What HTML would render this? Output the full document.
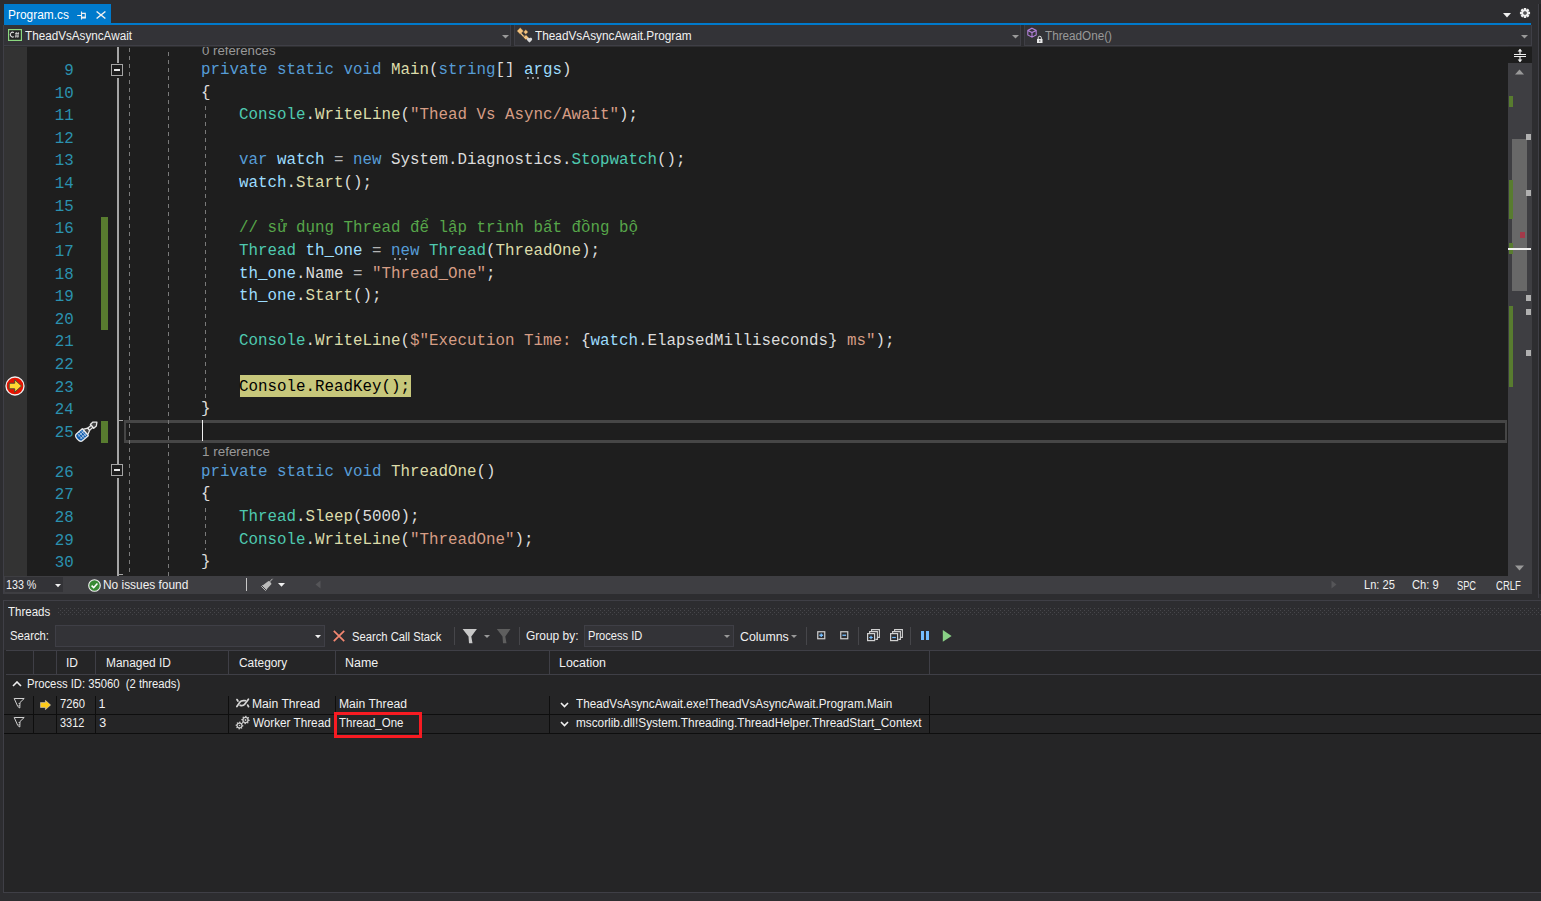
<!DOCTYPE html>
<html><head><meta charset="utf-8"><title>Program.cs</title>
<style>
html,body{margin:0;padding:0;}
body{width:1541px;height:901px;overflow:hidden;position:relative;background:#2d2d30;font-family:"Liberation Sans",sans-serif;}
</style></head><body>
<div style="position:absolute;left:4px;top:4px;width:107px;height:21px;background:#007acc;"></div><div style="position:absolute;left:4px;top:23px;width:1527px;height:2px;background:#007acc;"></div><div style="position:absolute;left:7.50px;top:6.07px;height:18px;line-height:18px;font-family:'Liberation Sans', sans-serif;font-size:12.5px;color:#ffffff;white-space:pre;transform:scaleX(0.9535);transform-origin:0 0;">Program.cs</div><svg style="position:absolute;left:77px;top:11px;" width="10" height="9" viewBox="0 0 10 9"><path d="M0.2 4.5H4.5M4.5 0.6V8.4M4.5 2.4H8.3V6.8H4.5" stroke="#f0f0f0" stroke-width="1.1" fill="none"/><rect x="4.5" y="5.6" width="4.3" height="1.8" fill="#f0f0f0"/></svg><svg style="position:absolute;left:96px;top:11px;" width="10" height="8" viewBox="0 0 10 8"><path d="M0.6 0.5L9.4 7.5M9.4 0.5L0.6 7.5" stroke="#f0f0f0" stroke-width="1.4" fill="none"/></svg><svg style="position:absolute;left:1503px;top:13px;" width="8" height="5" viewBox="0 0 8 5"><path d="M0 0H8L4 4.5Z" fill="#f0f0f0"/></svg><svg style="position:absolute;left:1519px;top:7px;" width="12" height="12" viewBox="0 0 12 12"><path d="M11.07 4.87L11.07 7.13L9.46 7.30L9.37 7.53L10.39 8.79L8.79 10.39L7.53 9.37L7.30 9.46L7.13 11.07L4.87 11.07L4.70 9.46L4.47 9.37L3.21 10.39L1.61 8.79L2.63 7.53L2.54 7.30L0.93 7.13L0.93 4.87L2.54 4.70L2.63 4.47L1.61 3.21L3.21 1.61L4.47 2.63L4.70 2.54L4.87 0.93L7.13 0.93L7.30 2.54L7.53 2.63L8.79 1.61L10.39 3.21L9.37 4.47L9.46 4.70Z" fill="#f0f0f0"/><circle cx="6" cy="6" r="1.8" fill="#2d2d30"/><circle cx="6" cy="6" r="0.8" fill="#888888"/></svg><div style="position:absolute;left:3px;top:25px;width:1px;height:21px;background:#3f3f46;"></div><div style="position:absolute;left:4px;top:25px;width:1527px;height:20px;background:#333337;"></div><div style="position:absolute;left:4px;top:45px;width:1527px;height:1px;background:#3f3f46;"></div><div style="position:absolute;left:510px;top:25px;width:1px;height:21px;background:#3f3f46;"></div><div style="position:absolute;left:511px;top:25px;width:3px;height:21px;background:#2d2d30;"></div><div style="position:absolute;left:514px;top:25px;width:1px;height:21px;background:#3f3f46;"></div><div style="position:absolute;left:1020px;top:25px;width:1px;height:21px;background:#3f3f46;"></div><div style="position:absolute;left:1021px;top:25px;width:3px;height:21px;background:#2d2d30;"></div><div style="position:absolute;left:1024px;top:25px;width:1px;height:21px;background:#3f3f46;"></div><div style="position:absolute;left:1531px;top:25px;width:1px;height:21px;background:#3f3f46;"></div><svg style="position:absolute;left:8px;top:29px;" width="14" height="12" viewBox="0 0 14 12"><rect x="0.6" y="0.6" width="12.8" height="10.8" fill="#252526" stroke="#8bd880" stroke-width="1.2"/><path d="M5.9 3.6A2.3 2.4 0 1 0 5.9 7.6" stroke="#e0e0e0" stroke-width="1.1" fill="none"/><path d="M8.3 3L7.8 8.8M10.3 3L9.8 8.8M7.1 4.6H11.1M6.9 7.1H10.9" stroke="#e0e0e0" stroke-width="0.8"/></svg><div style="position:absolute;left:24.97px;top:26.87px;height:18px;line-height:18px;font-family:'Liberation Sans', sans-serif;font-size:12.5px;color:#f1f1f1;white-space:pre;transform:scaleX(0.9351);transform-origin:0 0;">TheadVsAsyncAwait</div><svg style="position:absolute;left:502px;top:35px;" width="7" height="4" viewBox="0 0 7 4"><path d="M0 0H7L3.5 3.5Z" fill="#999999"/></svg><svg style="position:absolute;left:516px;top:27px;" width="17" height="16" viewBox="0 0 17 16"><g fill="#f2c27f" stroke="#3a2e1c" stroke-width="0.4"><path d="M4.2 0.6L7.6 4L4.2 7.4L0.8 4Z"/><path d="M9.8 2.6L12.2 5L9.8 7.4L7.4 5Z"/><path d="M10 7.8L12.6 10.4L10 13L7.4 10.4Z"/></g><path d="M5 6.5L7.3 9.2H8.5" stroke="#f2c27f" stroke-width="1.3" fill="none"/><path d="M13.5 11.2C14.6 10.2 16.3 10.9 16.2 12.3C16.1 13.4 14.6 14.5 13.5 15.5C12.4 14.5 10.9 13.4 10.8 12.3C10.7 10.9 12.4 10.2 13.5 11.2Z" fill="#d8d8d8"/></svg><div style="position:absolute;left:534.87px;top:26.87px;height:18px;line-height:18px;font-family:'Liberation Sans', sans-serif;font-size:12.5px;color:#f1f1f1;white-space:pre;transform:scaleX(0.9447);transform-origin:0 0;">TheadVsAsyncAwait.Program</div><svg style="position:absolute;left:1012px;top:35px;" width="7" height="4" viewBox="0 0 7 4"><path d="M0 0H7L3.5 3.5Z" fill="#999999"/></svg><svg style="position:absolute;left:1027px;top:27px;" width="17" height="16" viewBox="0 0 17 16"><path d="M5 1.2L9.2 3.4V8L5 10.2L0.8 8V3.4Z M0.8 3.4L5 5.6L9.2 3.4 M5 5.6V10.2" stroke="#b180d7" stroke-width="1.1" fill="none"/><rect x="10" y="12" width="5.5" height="4" fill="#e8e8e8"/><path d="M11.2 12V10.8A1.55 1.55 0 0 1 14.3 10.8V12" stroke="#e8e8e8" stroke-width="1" fill="none"/><rect x="12.3" y="13.3" width="1" height="1.3" fill="#333337"/></svg><div style="position:absolute;left:1045.17px;top:26.87px;height:18px;line-height:18px;font-family:'Liberation Sans', sans-serif;font-size:12.5px;color:#999999;white-space:pre;transform:scaleX(0.9361);transform-origin:0 0;">ThreadOne()</div><svg style="position:absolute;left:1521px;top:35px;" width="7" height="4" viewBox="0 0 7 4"><path d="M0 0H7L3.5 3.5Z" fill="#999999"/></svg><div style="position:absolute;left:3px;top:46px;width:1px;height:548px;background:#3f3f46;"></div><div style="position:absolute;left:4px;top:46px;width:23px;height:530px;background:#333333;"></div><div style="position:absolute;left:27px;top:46px;width:1481px;height:530px;background:#1e1e1e;"></div><div style="position:absolute;left:4px;top:46px;width:1504px;height:1px;background:#2f2f31;"></div><div style="position:absolute;left:1538px;top:0px;width:1px;height:594px;background:#3f3f46;top:4px"></div><div style="position:absolute;left:1539px;top:4px;width:2px;height:590px;background:#252526;"></div><div style="position:absolute;left:0;top:47px;width:1508px;height:529px;overflow:hidden;"><div style="position:absolute;left:124px;top:373px;width:1383px;height:23px;box-sizing:border-box;border-style:solid;border-color:#464646;border-width:3px 2px;"></div><div style="position:absolute;left:128.6px;top:1px;width:1.6px;height:528px;background:repeating-linear-gradient(to bottom,#7a7a7a 0 4px,transparent 4px 8px);"></div><div style="position:absolute;left:167.6px;top:5px;width:1.6px;height:524px;background:repeating-linear-gradient(to bottom,#7a7a7a 0 4px,transparent 4px 8px);"></div><div style="position:absolute;left:204.6px;top:59px;width:1.6px;height:302px;background:repeating-linear-gradient(to bottom,#7a7a7a 0 4px,transparent 4px 8px);"></div><div style="position:absolute;left:204.6px;top:461px;width:1.6px;height:42px;background:repeating-linear-gradient(to bottom,#7a7a7a 0 4px,transparent 4px 8px);"></div><div style="position:absolute;left:117px;top:0px;width:2px;height:16px;background:#a5a5a5;"></div><svg style="position:absolute;left:111px;top:17px;" width="12" height="12" viewBox="0 0 12 12"><rect x="0.5" y="0.5" width="11" height="11" fill="#1e1e1e" stroke="#a5a5a5" stroke-width="1"/><rect x="3" y="5" width="6" height="2" fill="#e8e8e8"/></svg><div style="position:absolute;left:117px;top:31px;width:2px;height:342px;background:#a5a5a5;"></div><div style="position:absolute;left:117px;top:373px;width:6px;height:1px;background:#a5a5a5;"></div><div style="position:absolute;left:117px;top:374px;width:2px;height:43px;background:#a5a5a5;"></div><svg style="position:absolute;left:111px;top:417px;" width="12" height="12" viewBox="0 0 12 12"><rect x="0.5" y="0.5" width="11" height="11" fill="#1e1e1e" stroke="#a5a5a5" stroke-width="1"/><rect x="3" y="5" width="6" height="2" fill="#e8e8e8"/></svg><div style="position:absolute;left:117px;top:431px;width:2px;height:98px;background:#a5a5a5;"></div><div style="position:absolute;left:117px;top:527px;width:6px;height:1px;background:#a5a5a5;"></div><div style="position:absolute;left:101px;top:170.0px;width:7px;height:112.9px;background:#587c2f;"></div><div style="position:absolute;left:101px;top:373.6px;width:7px;height:22.4px;background:#587c2f;"></div><div style="position:absolute;left:64.30px;top:12.99px;height:22px;line-height:22px;font-family:'Liberation Mono', monospace;font-size:15.8333px;color:#2b91af;white-space:pre;">9</div><div style="position:absolute;left:54.80px;top:35.61px;height:22px;line-height:22px;font-family:'Liberation Mono', monospace;font-size:15.8333px;color:#2b91af;white-space:pre;">10</div><div style="position:absolute;left:54.80px;top:58.24px;height:22px;line-height:22px;font-family:'Liberation Mono', monospace;font-size:15.8333px;color:#2b91af;white-space:pre;">11</div><div style="position:absolute;left:54.80px;top:80.86px;height:22px;line-height:22px;font-family:'Liberation Mono', monospace;font-size:15.8333px;color:#2b91af;white-space:pre;">12</div><div style="position:absolute;left:54.80px;top:103.49px;height:22px;line-height:22px;font-family:'Liberation Mono', monospace;font-size:15.8333px;color:#2b91af;white-space:pre;">13</div><div style="position:absolute;left:54.80px;top:126.11px;height:22px;line-height:22px;font-family:'Liberation Mono', monospace;font-size:15.8333px;color:#2b91af;white-space:pre;">14</div><div style="position:absolute;left:54.80px;top:148.74px;height:22px;line-height:22px;font-family:'Liberation Mono', monospace;font-size:15.8333px;color:#2b91af;white-space:pre;">15</div><div style="position:absolute;left:54.80px;top:171.36px;height:22px;line-height:22px;font-family:'Liberation Mono', monospace;font-size:15.8333px;color:#2b91af;white-space:pre;">16</div><div style="position:absolute;left:54.80px;top:193.99px;height:22px;line-height:22px;font-family:'Liberation Mono', monospace;font-size:15.8333px;color:#2b91af;white-space:pre;">17</div><div style="position:absolute;left:54.80px;top:216.61px;height:22px;line-height:22px;font-family:'Liberation Mono', monospace;font-size:15.8333px;color:#2b91af;white-space:pre;">18</div><div style="position:absolute;left:54.80px;top:239.24px;height:22px;line-height:22px;font-family:'Liberation Mono', monospace;font-size:15.8333px;color:#2b91af;white-space:pre;">19</div><div style="position:absolute;left:54.80px;top:261.86px;height:22px;line-height:22px;font-family:'Liberation Mono', monospace;font-size:15.8333px;color:#2b91af;white-space:pre;">20</div><div style="position:absolute;left:54.80px;top:284.49px;height:22px;line-height:22px;font-family:'Liberation Mono', monospace;font-size:15.8333px;color:#2b91af;white-space:pre;">21</div><div style="position:absolute;left:54.80px;top:307.11px;height:22px;line-height:22px;font-family:'Liberation Mono', monospace;font-size:15.8333px;color:#2b91af;white-space:pre;">22</div><div style="position:absolute;left:54.80px;top:329.74px;height:22px;line-height:22px;font-family:'Liberation Mono', monospace;font-size:15.8333px;color:#2b91af;white-space:pre;">23</div><div style="position:absolute;left:54.80px;top:352.36px;height:22px;line-height:22px;font-family:'Liberation Mono', monospace;font-size:15.8333px;color:#2b91af;white-space:pre;">24</div><div style="position:absolute;left:54.80px;top:374.99px;height:22px;line-height:22px;font-family:'Liberation Mono', monospace;font-size:15.8333px;color:#2b91af;white-space:pre;">25</div><div style="position:absolute;left:54.80px;top:414.81px;height:22px;line-height:22px;font-family:'Liberation Mono', monospace;font-size:15.8333px;color:#2b91af;white-space:pre;">26</div><div style="position:absolute;left:54.80px;top:437.44px;height:22px;line-height:22px;font-family:'Liberation Mono', monospace;font-size:15.8333px;color:#2b91af;white-space:pre;">27</div><div style="position:absolute;left:54.80px;top:460.06px;height:22px;line-height:22px;font-family:'Liberation Mono', monospace;font-size:15.8333px;color:#2b91af;white-space:pre;">28</div><div style="position:absolute;left:54.80px;top:482.69px;height:22px;line-height:22px;font-family:'Liberation Mono', monospace;font-size:15.8333px;color:#2b91af;white-space:pre;">29</div><div style="position:absolute;left:54.80px;top:505.31px;height:22px;line-height:22px;font-family:'Liberation Mono', monospace;font-size:15.8333px;color:#2b91af;white-space:pre;">30</div><div style="position:absolute;left:240px;top:328px;width:171px;height:22px;background:#c7c77b;"></div><div style="position:absolute;left:201.00px;top:11.99px;height:22px;line-height:22px;font-family:'Liberation Mono', monospace;font-size:15.8333px;color:#dcdcdc;white-space:pre;"><span style="color:#569cd6">private</span><span style="color:#dcdcdc"> </span><span style="color:#569cd6">static</span><span style="color:#dcdcdc"> </span><span style="color:#569cd6">void</span><span style="color:#dcdcdc"> </span><span style="color:#dcdcaa">Main</span><span style="color:#dcdcdc">(</span><span style="color:#569cd6">string</span><span style="color:#dcdcdc">[] </span><span style="color:#9cdcfe">args</span><span style="color:#dcdcdc">)</span></div><div style="position:absolute;left:201.00px;top:34.61px;height:22px;line-height:22px;font-family:'Liberation Mono', monospace;font-size:15.8333px;color:#dcdcdc;white-space:pre;"><span style="color:#dcdcdc">{</span></div><div style="position:absolute;left:239.00px;top:57.24px;height:22px;line-height:22px;font-family:'Liberation Mono', monospace;font-size:15.8333px;color:#dcdcdc;white-space:pre;"><span style="color:#4ec9b0">Console</span><span style="color:#dcdcdc">.</span><span style="color:#dcdcaa">WriteLine</span><span style="color:#dcdcdc">(</span><span style="color:#d69d85">&quot;Thead Vs Async/Await&quot;</span><span style="color:#dcdcdc">);</span></div><div style="position:absolute;left:239.00px;top:102.49px;height:22px;line-height:22px;font-family:'Liberation Mono', monospace;font-size:15.8333px;color:#dcdcdc;white-space:pre;"><span style="color:#569cd6">var</span><span style="color:#dcdcdc"> </span><span style="color:#9cdcfe">watch</span><span style="color:#b4b4b4"> = </span><span style="color:#569cd6">new</span><span style="color:#dcdcdc"> System.Diagnostics.</span><span style="color:#4ec9b0">Stopwatch</span><span style="color:#dcdcdc">();</span></div><div style="position:absolute;left:239.00px;top:125.11px;height:22px;line-height:22px;font-family:'Liberation Mono', monospace;font-size:15.8333px;color:#dcdcdc;white-space:pre;"><span style="color:#9cdcfe">watch</span><span style="color:#dcdcdc">.</span><span style="color:#dcdcaa">Start</span><span style="color:#dcdcdc">();</span></div><div style="position:absolute;left:239.00px;top:170.36px;height:22px;line-height:22px;font-family:'Liberation Mono', monospace;font-size:15.8333px;color:#dcdcdc;white-space:pre;"><span style="color:#57a64a">// sử dụng Thread để lập trình bất đồng bộ</span></div><div style="position:absolute;left:239.00px;top:192.99px;height:22px;line-height:22px;font-family:'Liberation Mono', monospace;font-size:15.8333px;color:#dcdcdc;white-space:pre;"><span style="color:#4ec9b0">Thread</span><span style="color:#dcdcdc"> </span><span style="color:#9cdcfe">th_one</span><span style="color:#b4b4b4"> = </span><span style="color:#569cd6">new</span><span style="color:#dcdcdc"> </span><span style="color:#4ec9b0">Thread</span><span style="color:#dcdcdc">(</span><span style="color:#dcdcaa">ThreadOne</span><span style="color:#dcdcdc">);</span></div><div style="position:absolute;left:239.00px;top:215.61px;height:22px;line-height:22px;font-family:'Liberation Mono', monospace;font-size:15.8333px;color:#dcdcdc;white-space:pre;"><span style="color:#9cdcfe">th_one</span><span style="color:#dcdcdc">.Name</span><span style="color:#b4b4b4"> = </span><span style="color:#d69d85">&quot;Thread_One&quot;</span><span style="color:#dcdcdc">;</span></div><div style="position:absolute;left:239.00px;top:238.24px;height:22px;line-height:22px;font-family:'Liberation Mono', monospace;font-size:15.8333px;color:#dcdcdc;white-space:pre;"><span style="color:#9cdcfe">th_one</span><span style="color:#dcdcdc">.</span><span style="color:#dcdcaa">Start</span><span style="color:#dcdcdc">();</span></div><div style="position:absolute;left:239.00px;top:283.49px;height:22px;line-height:22px;font-family:'Liberation Mono', monospace;font-size:15.8333px;color:#dcdcdc;white-space:pre;"><span style="color:#4ec9b0">Console</span><span style="color:#dcdcdc">.</span><span style="color:#dcdcaa">WriteLine</span><span style="color:#dcdcdc">(</span><span style="color:#d69d85">$&quot;Execution Time: </span><span style="color:#dcdcdc">{</span><span style="color:#9cdcfe">watch</span><span style="color:#dcdcdc">.ElapsedMilliseconds</span><span style="color:#dcdcdc">}</span><span style="color:#d69d85"> ms&quot;</span><span style="color:#dcdcdc">);</span></div><div style="position:absolute;left:239.00px;top:328.74px;height:22px;line-height:22px;font-family:'Liberation Mono', monospace;font-size:15.8333px;color:#dcdcdc;white-space:pre;"><span style="color:#000000">Console.ReadKey();</span></div><div style="position:absolute;left:201.00px;top:351.36px;height:22px;line-height:22px;font-family:'Liberation Mono', monospace;font-size:15.8333px;color:#dcdcdc;white-space:pre;"><span style="color:#dcdcdc">}</span></div><div style="position:absolute;left:201.00px;top:413.81px;height:22px;line-height:22px;font-family:'Liberation Mono', monospace;font-size:15.8333px;color:#dcdcdc;white-space:pre;"><span style="color:#569cd6">private</span><span style="color:#dcdcdc"> </span><span style="color:#569cd6">static</span><span style="color:#dcdcdc"> </span><span style="color:#569cd6">void</span><span style="color:#dcdcdc"> </span><span style="color:#dcdcaa">ThreadOne</span><span style="color:#dcdcdc">()</span></div><div style="position:absolute;left:201.00px;top:436.44px;height:22px;line-height:22px;font-family:'Liberation Mono', monospace;font-size:15.8333px;color:#dcdcdc;white-space:pre;"><span style="color:#dcdcdc">{</span></div><div style="position:absolute;left:239.00px;top:459.06px;height:22px;line-height:22px;font-family:'Liberation Mono', monospace;font-size:15.8333px;color:#dcdcdc;white-space:pre;"><span style="color:#4ec9b0">Thread</span><span style="color:#dcdcdc">.</span><span style="color:#dcdcaa">Sleep</span><span style="color:#dcdcdc">(</span><span style="color:#dcdcdc">5000</span><span style="color:#dcdcdc">);</span></div><div style="position:absolute;left:239.00px;top:481.69px;height:22px;line-height:22px;font-family:'Liberation Mono', monospace;font-size:15.8333px;color:#dcdcdc;white-space:pre;"><span style="color:#4ec9b0">Console</span><span style="color:#dcdcdc">.</span><span style="color:#dcdcaa">WriteLine</span><span style="color:#dcdcdc">(</span><span style="color:#d69d85">&quot;ThreadOne&quot;</span><span style="color:#dcdcdc">);</span></div><div style="position:absolute;left:201.00px;top:504.31px;height:22px;line-height:22px;font-family:'Liberation Mono', monospace;font-size:15.8333px;color:#dcdcdc;white-space:pre;"><span style="color:#dcdcdc">}</span></div><div style="position:absolute;left:202.02px;top:-4.73px;height:18px;line-height:18px;font-family:'Liberation Sans', sans-serif;font-size:12.5px;color:#999999;white-space:pre;transform:scaleX(1.0584);transform-origin:0 0;">0 references</div><div style="position:absolute;left:201.58px;top:395.87px;height:18px;line-height:18px;font-family:'Liberation Sans', sans-serif;font-size:12.5px;color:#999999;white-space:pre;transform:scaleX(1.0746);transform-origin:0 0;">1 reference</div><div style="position:absolute;left:201.6px;top:373px;width:1.7px;height:21px;background:#f0f0f0;"></div><div style="position:absolute;left:526.6px;top:30.1px;width:2px;height:2px;border-radius:1px;background:#b0b0b0;"></div><div style="position:absolute;left:532.0px;top:30.1px;width:2px;height:2px;border-radius:1px;background:#b0b0b0;"></div><div style="position:absolute;left:537.4px;top:30.1px;width:2px;height:2px;border-radius:1px;background:#b0b0b0;"></div><div style="position:absolute;left:393.8px;top:210.6px;width:2px;height:2px;border-radius:1px;background:#b0b0b0;"></div><div style="position:absolute;left:399.2px;top:210.6px;width:2px;height:2px;border-radius:1px;background:#b0b0b0;"></div><div style="position:absolute;left:404.6px;top:210.6px;width:2px;height:2px;border-radius:1px;background:#b0b0b0;"></div><svg style="position:absolute;left:5px;top:329px;" width="20" height="20" viewBox="0 0 20 20"><circle cx="10" cy="10" r="9" fill="#e51400" stroke="#f0f0f0" stroke-width="1.3"/><path d="M4.2 7.2H9.7V3.7L16.6 10L9.7 16.3V12.8H4.2Z" fill="#ffd731" stroke="#4a4a3a" stroke-width="1"/></svg><svg style="position:absolute;left:72px;top:371px;" width="28" height="28" viewBox="0 0 28 28"><g transform="translate(15.25 12.5) rotate(-41)" stroke="#e8e8e8" stroke-width="1.3" stroke-linejoin="round"><path d="M6.3 -2.6H9.8L12.8 0L9.8 2.6H6.3Z" fill="#454545"/><rect x="1.8" y="-1.4" width="4.6" height="2.8" fill="#454545"/><path d="M-2.6 -3.6L1.8 -1.5V1.5L-2.6 3.6Z" fill="#454545"/><path d="M-2.6 -4.6H-10.5A2.6 4.6 0 0 0 -10.5 4.6H-2.6Z" fill="#0f5fb0"/></g><g transform="translate(15.25 12.5) rotate(-41)" stroke="#cfd8e8" stroke-width="0.7"><path d="M-4.6 -4V4M-7 -4V4M-9.4 -3.6V3.6M-10.5 -1.6H-2.8M-10.5 1.6H-2.8"/></g></svg></div><div style="position:absolute;left:1508px;top:47px;width:24px;height:529px;background:#3e3e42;"></div><div style="position:absolute;left:1508px;top:47px;width:24px;height:16px;background:#1e1e1e;"></div><svg style="position:absolute;left:1512px;top:47px;" width="16" height="16" viewBox="0 0 16 16"><path d="M2 7.5H14M2 9.5H14M8 2.5V7.5M8 9.5V14.5" stroke="#f0f0f0" stroke-width="1.2" fill="none"/><path d="M5.6 4.6L8 1.8L10.4 4.6Z M5.6 12.4L8 15.2L10.4 12.4Z" fill="#f0f0f0"/></svg><svg style="position:absolute;left:1515px;top:69px;" width="10" height="6" viewBox="0 0 10 6"><path d="M0 5.5H9L4.5 0.5Z" fill="#999999"/></svg><svg style="position:absolute;left:1515px;top:565px;" width="10" height="6" viewBox="0 0 10 6"><path d="M0 0.5H9L4.5 5.5Z" fill="#999999"/></svg><div style="position:absolute;left:1512px;top:139px;width:15px;height:152px;background:#686868;"></div><div style="position:absolute;left:1509px;top:96px;width:4px;height:11px;background:#587c2f;"></div><div style="position:absolute;left:1509px;top:180px;width:4px;height:39px;background:#587c2f;"></div><div style="position:absolute;left:1509px;top:243px;width:4px;height:11px;background:#587c2f;"></div><div style="position:absolute;left:1509px;top:306px;width:4px;height:81px;background:#587c2f;"></div><div style="position:absolute;left:1520px;top:232px;width:5px;height:6px;background:#a33a4a;"></div><div style="position:absolute;left:1508px;top:248px;width:23px;height:2px;background:#f0f0f0;"></div><div style="position:absolute;left:1526px;top:134px;width:5px;height:6px;background:#b0b0b0;"></div><div style="position:absolute;left:1526px;top:190px;width:5px;height:6px;background:#b0b0b0;"></div><div style="position:absolute;left:1526px;top:295px;width:5px;height:6px;background:#b0b0b0;"></div><div style="position:absolute;left:1526px;top:309px;width:5px;height:6px;background:#b0b0b0;"></div><div style="position:absolute;left:1526px;top:350px;width:5px;height:6px;background:#b0b0b0;"></div><div style="position:absolute;left:4px;top:576px;width:1528px;height:18px;background:#3e3e42;"></div><div style="position:absolute;left:5px;top:577px;width:58px;height:15px;background:#333337;"></div><div style="position:absolute;left:5.60px;top:576.64px;height:17px;line-height:17px;font-family:'Liberation Sans', sans-serif;font-size:12px;color:#f1f1f1;white-space:pre;transform:scaleX(0.8933);transform-origin:0 0;">133 %</div><svg style="position:absolute;left:55px;top:584px;" width="6" height="4" viewBox="0 0 6 4"><path d="M0 0H6L3 3.2Z" fill="#f0f0f0"/></svg><svg style="position:absolute;left:88px;top:579px;" width="13" height="13" viewBox="0 0 13 13"><circle cx="6.5" cy="6.5" r="5.8" fill="#388a34" stroke="#f0f0f0" stroke-width="1.1"/><path d="M3.6 6.6L5.7 8.6L9.4 4.6" stroke="#ffffff" stroke-width="1.5" fill="none"/></svg><div style="position:absolute;left:103.31px;top:576.64px;height:17px;line-height:17px;font-family:'Liberation Sans', sans-serif;font-size:12px;color:#f1f1f1;white-space:pre;transform:scaleX(0.9917);transform-origin:0 0;">No issues found</div><div style="position:absolute;left:246px;top:578px;width:1.3px;height:13px;background:#c8c8c8;"></div><svg style="position:absolute;left:261px;top:578px;" width="13" height="13" viewBox="0 0 13 13"><path d="M11.5 0.8L8.5 4" stroke="#bbbbbb" stroke-width="1"/><path d="M7.5 3C9 3.5 10 4.5 10.5 6L5.5 11.5L1.5 7.5Z" fill="#bbbbbb"/><path d="M1.5 7.5L5.5 11.5L4.5 12.5L0.5 8.5Z" fill="none" stroke="#bbbbbb" stroke-width="1"/></svg><svg style="position:absolute;left:278px;top:583px;" width="7" height="4" viewBox="0 0 7 4"><path d="M0 0H7L3.5 3.8Z" fill="#f0f0f0"/></svg><svg style="position:absolute;left:315px;top:580px;" width="6" height="9" viewBox="0 0 6 9"><path d="M5.5 0.5V8.5L0.5 4.5Z" fill="#555558"/></svg><svg style="position:absolute;left:1331px;top:580px;" width="6" height="9" viewBox="0 0 6 9"><path d="M0.5 0.5V8.5L5.5 4.5Z" fill="#555558"/></svg><div style="position:absolute;left:1363.58px;top:576.64px;height:17px;line-height:17px;font-family:'Liberation Sans', sans-serif;font-size:12px;color:#f1f1f1;white-space:pre;transform:scaleX(0.9248);transform-origin:0 0;">Ln: 25</div><div style="position:absolute;left:1411.94px;top:576.64px;height:17px;line-height:17px;font-family:'Liberation Sans', sans-serif;font-size:12px;color:#f1f1f1;white-space:pre;transform:scaleX(0.9273);transform-origin:0 0;">Ch: 9</div><div style="position:absolute;left:1457.31px;top:577.64px;height:17px;line-height:17px;font-family:'Liberation Sans', sans-serif;font-size:12px;color:#f1f1f1;white-space:pre;transform:scaleX(0.7722);transform-origin:0 0;">SPC</div><div style="position:absolute;left:1496.22px;top:577.64px;height:17px;line-height:17px;font-family:'Liberation Sans', sans-serif;font-size:12px;color:#f1f1f1;white-space:pre;transform:scaleX(0.7954);transform-origin:0 0;">CRLF</div><div style="position:absolute;left:3px;top:600px;width:1538px;height:1px;background:#3f3f46;"></div><div style="position:absolute;left:3px;top:600px;width:1px;height:293px;background:#3f3f46;"></div><div style="position:absolute;left:3px;top:892px;width:1538px;height:1px;background:#3f3f46;"></div><div style="position:absolute;left:8.18px;top:603.07px;height:18px;line-height:18px;font-family:'Liberation Sans', sans-serif;font-size:12.5px;color:#f1f1f1;white-space:pre;transform:scaleX(0.9202);transform-origin:0 0;">Threads</div><div style="position:absolute;left:58px;top:608px;width:1483px;height:7px;background-image:radial-gradient(circle at 0.5px 0.5px,#46464a 0.7px,transparent 0.8px),radial-gradient(circle at 2.5px 2.5px,#46464a 0.7px,transparent 0.8px);background-size:4px 4px,4px 4px;"></div><div style="position:absolute;left:10.41px;top:626.97px;height:18px;line-height:18px;font-family:'Liberation Sans', sans-serif;font-size:12.5px;color:#f1f1f1;white-space:pre;transform:scaleX(0.9058);transform-origin:0 0;">Search:</div><div style="position:absolute;left:55px;top:625px;width:270px;height:22px;box-sizing:border-box;background:#333337;border:1px solid #3f3f46;"></div><svg style="position:absolute;left:315px;top:635px;" width="6" height="4" viewBox="0 0 6 4"><path d="M0 0H6L3 3.2Z" fill="#f0f0f0"/></svg><svg style="position:absolute;left:333px;top:630px;" width="12" height="12" viewBox="0 0 12 12"><path d="M0.8 0.8L11.2 11.2M11.2 0.8L0.8 11.2" stroke="#f48771" stroke-width="1.7"/></svg><div style="position:absolute;left:352.42px;top:627.87px;height:18px;line-height:18px;font-family:'Liberation Sans', sans-serif;font-size:12.5px;color:#f1f1f1;white-space:pre;transform:scaleX(0.8987);transform-origin:0 0;">Search Call Stack</div><div style="position:absolute;left:454px;top:627px;width:1px;height:18px;background:#46464a;"></div><svg style="position:absolute;left:462px;top:628px;" width="16" height="16" viewBox="0 0 16 16"><path d="M0.6 1H14.9L9.3 8.5L10.5 15.3H7L6.5 8.5Z" fill="#c8c8c8"/></svg><svg style="position:absolute;left:484px;top:635px;" width="6" height="3" viewBox="0 0 6 3"><path d="M0 0H6L3 3Z" fill="#999999"/></svg><svg style="position:absolute;left:496px;top:628px;" width="16" height="16" viewBox="0 0 16 16"><path d="M0.8 1H14.5L9.3 8.5L10.5 15.3H7L6.5 8.5Z" fill="#5e5e5e"/></svg><div style="position:absolute;left:519px;top:627px;width:1px;height:18px;background:#46464a;"></div><div style="position:absolute;left:525.78px;top:626.97px;height:18px;line-height:18px;font-family:'Liberation Sans', sans-serif;font-size:12.5px;color:#f1f1f1;white-space:pre;transform:scaleX(0.9568);transform-origin:0 0;">Group by:</div><div style="position:absolute;left:584px;top:625px;width:150px;height:22px;box-sizing:border-box;background:#333337;border:1px solid #3f3f46;"></div><div style="position:absolute;left:587.57px;top:626.97px;height:18px;line-height:18px;font-family:'Liberation Sans', sans-serif;font-size:12.5px;color:#f1f1f1;white-space:pre;transform:scaleX(0.8893);transform-origin:0 0;">Process ID</div><svg style="position:absolute;left:724px;top:635px;" width="6" height="4" viewBox="0 0 6 4"><path d="M0 0H6L3 3Z" fill="#999999"/></svg><div style="position:absolute;left:739.76px;top:628.17px;height:18px;line-height:18px;font-family:'Liberation Sans', sans-serif;font-size:12.5px;color:#f1f1f1;white-space:pre;transform:scaleX(0.9876);transform-origin:0 0;">Columns</div><svg style="position:absolute;left:791px;top:635px;" width="6" height="4" viewBox="0 0 6 4"><path d="M0 0H6L3 3Z" fill="#999999"/></svg><div style="position:absolute;left:806px;top:627px;width:1px;height:18px;background:#46464a;"></div><svg style="position:absolute;left:817px;top:631px;" width="9" height="9" viewBox="0 0 9 9"><rect x="0.75" y="0.75" width="7" height="7" fill="none" stroke="#d0d0d0" stroke-width="1.2"/><path d="M2.4 4.25H6.1M4.25 2.4V6.1" stroke="#75beff" stroke-width="1.3"/></svg><svg style="position:absolute;left:840px;top:631px;" width="9" height="9" viewBox="0 0 9 9"><rect x="0.75" y="0.75" width="7" height="7" fill="none" stroke="#d0d0d0" stroke-width="1.2"/><path d="M2.4 4.25H6.1" stroke="#75beff" stroke-width="1.3"/></svg><div style="position:absolute;left:858px;top:627px;width:1px;height:18px;background:#46464a;"></div><svg style="position:absolute;left:867px;top:629px;" width="13" height="13" viewBox="0 0 13 13"><path d="M4.6 2.6V0.6H12.4V8.4H10.4 M2.6 4.6V2.6H10.4V10.4H8.4" fill="none" stroke="#d0d0d0" stroke-width="1.1"/><rect x="0.6" y="4.6" width="7" height="7" fill="#2d2d30" stroke="#d0d0d0" stroke-width="1.2"/><path d="M2.2 8.5H5.8M4 6.7V10.3" stroke="#75beff" stroke-width="1.2"/></svg><svg style="position:absolute;left:890px;top:629px;" width="13" height="13" viewBox="0 0 13 13"><path d="M4.6 2.6V0.6H12.4V8.4H10.4 M2.6 4.6V2.6H10.4V10.4H8.4" fill="none" stroke="#d0d0d0" stroke-width="1.1"/><rect x="0.6" y="4.6" width="7" height="7" fill="#2d2d30" stroke="#d0d0d0" stroke-width="1.2"/><path d="M2.2 8.5H5.8" stroke="#75beff" stroke-width="1.2"/></svg><div style="position:absolute;left:910px;top:627px;width:1px;height:18px;background:#46464a;"></div><div style="position:absolute;left:921px;top:631px;width:3.3px;height:9px;background:#75beff;"></div><div style="position:absolute;left:925.8px;top:631px;width:3.3px;height:9px;background:#75beff;"></div><svg style="position:absolute;left:942px;top:629px;" width="11" height="14" viewBox="0 0 11 14"><path d="M0.8 1L9.6 6.9L0.8 12.8Z" fill="#89d185"/></svg><div style="position:absolute;left:4px;top:650px;width:1537px;height:242px;background:#252526;"></div><div style="position:absolute;left:6px;top:650px;width:1535px;height:1px;background:#3f3f46;"></div><div style="position:absolute;left:6px;top:674px;width:1535px;height:1px;background:#3f3f46;"></div><div style="position:absolute;left:33px;top:651px;width:1px;height:23px;background:#3f3f46;"></div><div style="position:absolute;left:56px;top:651px;width:1px;height:23px;background:#3f3f46;"></div><div style="position:absolute;left:95px;top:651px;width:1px;height:23px;background:#3f3f46;"></div><div style="position:absolute;left:228px;top:651px;width:1px;height:23px;background:#3f3f46;"></div><div style="position:absolute;left:335px;top:651px;width:1px;height:23px;background:#3f3f46;"></div><div style="position:absolute;left:549px;top:651px;width:1px;height:23px;background:#3f3f46;"></div><div style="position:absolute;left:929px;top:651px;width:1px;height:23px;background:#3f3f46;"></div><div style="position:absolute;left:66.29px;top:653.87px;height:18px;line-height:18px;font-family:'Liberation Sans', sans-serif;font-size:12.5px;color:#f1f1f1;white-space:pre;transform:scaleX(0.9630);transform-origin:0 0;">ID</div><div style="position:absolute;left:105.50px;top:653.87px;height:18px;line-height:18px;font-family:'Liberation Sans', sans-serif;font-size:12.5px;color:#f1f1f1;white-space:pre;transform:scaleX(0.9519);transform-origin:0 0;">Managed ID</div><div style="position:absolute;left:238.68px;top:653.87px;height:18px;line-height:18px;font-family:'Liberation Sans', sans-serif;font-size:12.5px;color:#f1f1f1;white-space:pre;transform:scaleX(0.9520);transform-origin:0 0;">Category</div><div style="position:absolute;left:345.35px;top:653.87px;height:18px;line-height:18px;font-family:'Liberation Sans', sans-serif;font-size:12.5px;color:#f1f1f1;white-space:pre;transform:scaleX(0.9968);transform-origin:0 0;">Name</div><div style="position:absolute;left:559.46px;top:653.87px;height:18px;line-height:18px;font-family:'Liberation Sans', sans-serif;font-size:12.5px;color:#f1f1f1;white-space:pre;transform:scaleX(0.9934);transform-origin:0 0;">Location</div><svg style="position:absolute;left:12px;top:681px;" width="10" height="6" viewBox="0 0 10 6"><path d="M1 5L5 1L9 5" stroke="#f0f0f0" stroke-width="1.6" fill="none"/></svg><div style="position:absolute;left:27.06px;top:675.27px;height:18px;line-height:18px;font-family:'Liberation Sans', sans-serif;font-size:12.5px;color:#f1f1f1;white-space:pre;transform:scaleX(0.8996);transform-origin:0 0;">Process ID: 35060  (2 threads)</div><div style="position:absolute;left:4px;top:714px;width:1537px;height:1px;background:#0e0e0e;"></div><div style="position:absolute;left:4px;top:733px;width:1537px;height:1px;background:#0e0e0e;"></div><div style="position:absolute;left:33px;top:696px;width:1px;height:37px;background:#0e0e0e;"></div><div style="position:absolute;left:56px;top:696px;width:1px;height:37px;background:#0e0e0e;"></div><div style="position:absolute;left:95px;top:696px;width:1px;height:37px;background:#0e0e0e;"></div><div style="position:absolute;left:228px;top:696px;width:1px;height:37px;background:#0e0e0e;"></div><div style="position:absolute;left:335px;top:696px;width:1px;height:37px;background:#0e0e0e;"></div><div style="position:absolute;left:549px;top:696px;width:1px;height:37px;background:#0e0e0e;"></div><div style="position:absolute;left:929px;top:696px;width:1px;height:37px;background:#0e0e0e;"></div><svg style="position:absolute;left:13px;top:697px;" width="12" height="12" viewBox="0 0 12 12"><path d="M1.2 1.5H11.2L7 5.5L6.8 11L4.8 9.5Z" fill="none" stroke="#d0d0d0" stroke-width="1" stroke-linejoin="round"/><path d="M5.5 6.5L7 6.5M5.5 8.5H6.8" stroke="#d0d0d0" stroke-width="0.8"/></svg><svg style="position:absolute;left:13px;top:716px;" width="12" height="12" viewBox="0 0 12 12"><path d="M1.2 1.5H11.2L7 5.5L6.8 11L4.8 9.5Z" fill="none" stroke="#d0d0d0" stroke-width="1" stroke-linejoin="round"/><path d="M5.5 6.5L7 6.5M5.5 8.5H6.8" stroke="#d0d0d0" stroke-width="0.8"/></svg><svg style="position:absolute;left:40px;top:700px;" width="11" height="10" viewBox="0 0 11 10"><path d="M0.4 2.6H5.4V0.3L10.6 5L5.4 9.7V7.5H0.4Z" fill="#ffcc1a" stroke="#d8d8f0" stroke-width="0.5"/></svg><div style="position:absolute;left:59.82px;top:694.77px;height:18px;line-height:18px;font-family:'Liberation Sans', sans-serif;font-size:12.5px;color:#f1f1f1;white-space:pre;transform:scaleX(0.8989);transform-origin:0 0;">7260</div><div style="position:absolute;left:98.60px;top:694.77px;height:18px;line-height:18px;font-family:'Liberation Sans', sans-serif;font-size:12.5px;color:#f1f1f1;white-space:pre;">1</div><svg style="position:absolute;left:234px;top:696px;" width="18" height="14" viewBox="0 0 18 14"><g stroke="#d4d4d4" stroke-width="1.8" fill="none" stroke-linecap="round"><path d="M2.9 10.6L6 6C6.8 4.9 8.2 4.6 9.4 4.6H11.3"/><path d="M14.4 3.3L10.7 8.3C9.9 9.4 8.6 9.8 7.3 9.7L6.2 9.3"/><path d="M3 3.6L3.9 5"/><path d="M13.7 9.1L14.5 10.6"/></g></svg><div style="position:absolute;left:252.28px;top:694.77px;height:18px;line-height:18px;font-family:'Liberation Sans', sans-serif;font-size:12.5px;color:#f1f1f1;white-space:pre;transform:scaleX(0.9706);transform-origin:0 0;">Main Thread</div><div style="position:absolute;left:338.58px;top:694.77px;height:18px;line-height:18px;font-family:'Liberation Sans', sans-serif;font-size:12.5px;color:#f1f1f1;white-space:pre;transform:scaleX(0.9706);transform-origin:0 0;">Main Thread</div><svg style="position:absolute;left:560px;top:702px;" width="9" height="6" viewBox="0 0 9 6"><path d="M1 1L4.5 4.5L8 1" stroke="#f0f0f0" stroke-width="1.6" fill="none"/></svg><div style="position:absolute;left:576.07px;top:694.77px;height:18px;line-height:18px;font-family:'Liberation Sans', sans-serif;font-size:12.5px;color:#f1f1f1;white-space:pre;transform:scaleX(0.9359);transform-origin:0 0;">TheadVsAsyncAwait.exe!TheadVsAsyncAwait.Program.Main</div><div style="position:absolute;left:59.92px;top:713.77px;height:18px;line-height:18px;font-family:'Liberation Sans', sans-serif;font-size:12.5px;color:#f1f1f1;white-space:pre;transform:scaleX(0.8722);transform-origin:0 0;">3312</div><div style="position:absolute;left:99.20px;top:713.77px;height:18px;line-height:18px;font-family:'Liberation Sans', sans-serif;font-size:12.5px;color:#f1f1f1;white-space:pre;">3</div><svg style="position:absolute;left:235px;top:715px;" width="16" height="16" viewBox="0 0 16 16"><path d="M14.80 5.00L14.72 5.84L13.46 6.22L13.16 6.78L13.54 8.04L12.89 8.58L11.72 7.96L11.12 8.14L10.50 9.30L9.66 9.22L9.28 7.96L8.72 7.66L7.46 8.04L6.92 7.39L7.54 6.22L7.36 5.62L6.20 5.00L6.28 4.16L7.54 3.78L7.84 3.22L7.46 1.96L8.11 1.42L9.28 2.04L9.88 1.86L10.50 0.70L11.34 0.78L11.72 2.04L12.28 2.34L13.54 1.96L14.08 2.61L13.46 3.78L13.64 4.38Z" fill="#c8c8c8"/><circle cx="10.5" cy="5" r="1.9" fill="#252526"/><circle cx="10.5" cy="5" r="0.9" fill="#c8c8c8"/><path d="M8.50 10.50L8.42 11.28L7.27 11.65L6.99 12.17L7.33 13.33L6.72 13.83L5.65 13.27L5.09 13.44L4.50 14.50L3.72 14.42L3.35 13.27L2.83 12.99L1.67 13.33L1.17 12.72L1.73 11.65L1.56 11.09L0.50 10.50L0.58 9.72L1.73 9.35L2.01 8.83L1.67 7.67L2.28 7.17L3.35 7.73L3.91 7.56L4.50 6.50L5.28 6.58L5.65 7.73L6.17 8.01L7.33 7.67L7.83 8.28L7.27 9.35L7.44 9.91Z" fill="#c8c8c8"/><circle cx="4.5" cy="10.5" r="1.8" fill="#252526"/><circle cx="4.5" cy="10.5" r="0.8" fill="#c8c8c8"/></svg><div style="position:absolute;left:253.25px;top:713.77px;height:18px;line-height:18px;font-family:'Liberation Sans', sans-serif;font-size:12.5px;color:#f1f1f1;white-space:pre;transform:scaleX(0.9367);transform-origin:0 0;">Worker Thread</div><div style="position:absolute;left:339.48px;top:713.77px;height:18px;line-height:18px;font-family:'Liberation Sans', sans-serif;font-size:12.5px;color:#f1f1f1;white-space:pre;transform:scaleX(0.9177);transform-origin:0 0;">Thread_One</div><svg style="position:absolute;left:560px;top:721px;" width="9" height="6" viewBox="0 0 9 6"><path d="M1 1L4.5 4.5L8 1" stroke="#f0f0f0" stroke-width="1.6" fill="none"/></svg><div style="position:absolute;left:575.60px;top:713.77px;height:18px;line-height:18px;font-family:'Liberation Sans', sans-serif;font-size:12.5px;color:#f1f1f1;white-space:pre;transform:scaleX(0.9436);transform-origin:0 0;">mscorlib.dll!System.Threading.ThreadHelper.ThreadStart_Context</div><div style="position:absolute;left:334px;top:712px;width:88px;height:26px;box-sizing:border-box;border:3px solid #f71b22;"></div>
</body></html>
